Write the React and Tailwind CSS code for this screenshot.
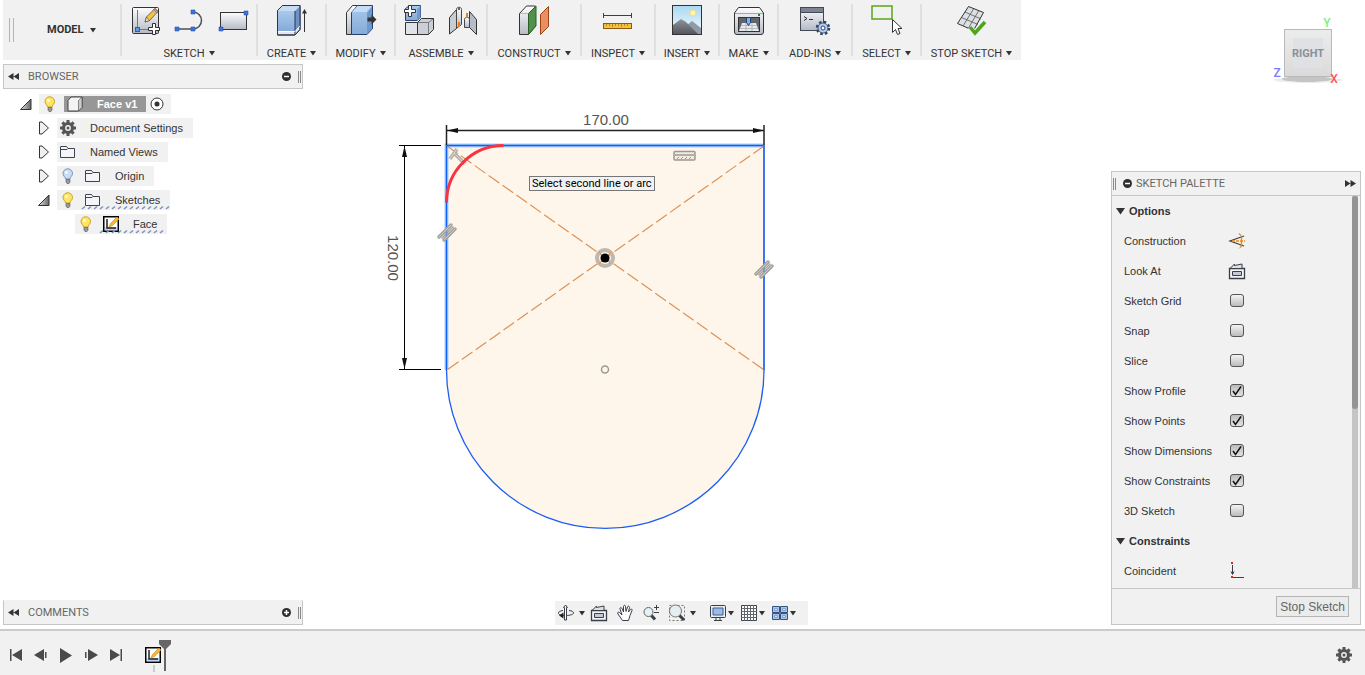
import React, { useState } from "react";

const Caret = () => (
  <svg width="6" height="5" viewBox="0 0 6 5" className="shrink-0" fill="#333">
    <path d="M0 0h6L3 4.5z" />
  </svg>
);

// Shared gradients for all the icons
const Defs = () => (
  <svg width="0" height="0" className="absolute">
    <defs>
      <linearGradient id="metal" x1="0" y1="0" x2="0" y2="1">
        <stop offset="0" stopColor="#fdfdfe" />
        <stop offset="1" stopColor="#b4bac5" />
      </linearGradient>
      <linearGradient id="blue" x1="0" y1="0" x2="0" y2="1">
        <stop offset="0" stopColor="#a9c8ec" />
        <stop offset="1" stopColor="#86abd8" />
      </linearGradient>
      <linearGradient id="sky" x1="0" y1="0" x2="0" y2="1">
        <stop offset="0" stopColor="#a9d8f2" />
        <stop offset="1" stopColor="#f4fbfe" />
      </linearGradient>
      <linearGradient id="dark" x1="0" y1="0" x2="0" y2="1">
        <stop offset="0" stopColor="#8f939a" />
        <stop offset="1" stopColor="#53565d" />
      </linearGradient>
      <linearGradient id="fold" x1="0" y1="0" x2="1" y2="0">
        <stop offset="0" stopColor="#e4e4e4" />
        <stop offset="1" stopColor="#666" />
      </linearGradient>
      <linearGradient id="cube" x1="0" y1="0" x2="0" y2="1">
        <stop offset="0" stopColor="#ececec" />
        <stop offset="1" stopColor="#dadada" />
      </linearGradient>
    </defs>
  </svg>
);

const ToolIcon = ({ children }) => (
  <svg width="32" height="32" viewBox="0 0 32 32" fill="none" className="shrink-0">
    {children}
  </svg>
);

const Plus = ({ x, y }) => (
  <path
    transform={`translate(${x} ${y})`}
    d="M4 0h3v4h4v3H7v4H4V7H0V4h4z"
    fill="#fff"
    stroke="#333"
  />
);

const Pencil = () => (
  <>
    <path d="M16 17l1.500-5L26 3.500l3 3L20.500 15.500z" fill="#f5c542" stroke="#5b4a21" strokeWidth=".8" />
    <path d="M16 17l1.500-5 3 3.500z" fill="#f0e0c4" stroke="#444" strokeWidth=".6" />
    <path d="M26 3.500l3 3L27.500 8l-3-3z" fill="#e59a8c" stroke="#333" strokeWidth=".6" />
    <path d="M24.500 5l3 3-1 1-3-3z" fill="#ddd" stroke="#666" strokeWidth=".4" />
  </>
);

const icons = {
  createSketch: (
    <ToolIcon>
      <rect x="3.500" y="2.500" width="26" height="26" rx="1" fill="url(#metal)" stroke="#333" />
      <path d="M8.500 5v18M8.500 24.500H27" stroke="#777" />
      <rect x="6.500" y="22.500" width="4" height="4" fill="#5b9bea" stroke="#2a5fb5" />
      <Pencil />
      <Plus x="19.500" y="18.500" />
    </ToolIcon>
  ),
  line: (
    <ToolIcon>
      <path d="M4 24h16a8.500 8.500 0 0 0 0-17" stroke="#4a4f58" strokeWidth="1.500" />
      <path d="M2 22h4v4H2zM18 22h4v4h-4zM18 5h4v4h-4z" fill="#3f73d8" stroke="#2655b0" strokeWidth=".6" />
    </ToolIcon>
  ),
  rectangle: (
    <ToolIcon>
      <rect x="3.500" y="7.500" width="26" height="17" fill="url(#metal)" stroke="#333" />
      <path d="M2 22h4v4H2zM27 6h4v4h-4z" fill="#3f73d8" stroke="#2655b0" strokeWidth=".6" />
    </ToolIcon>
  ),
  extrude: (
    <ToolIcon>
      <path d="M1.500 5.500l5-5H24v24l-5 5.500H1.500z" fill="#e3e6ea" stroke="#2a3550" />
      <path d="M2 6h17v20H2z" fill="url(#blue)" />
      <path d="M2 6l5-5h17l-5 5z" fill="#c6dcf4" />
      <path d="M19 6l5-5v20l-5 5z" fill="#6d93c6" />
      <path d="M1.500 5.500l5-5H24v24l-5 5.500H1.500zM19 6v23" stroke="#2a3550" />
      <path d="M2 26.500h17l5-5.500" stroke="#fff" strokeWidth=".8" />
      <path d="M28.500 27V5" stroke="#333" />
      <path d="M26 8.500l2.500-4.500L31 8.500z" fill="#333" />
    </ToolIcon>
  ),
  pressPull: (
    <ToolIcon>
      <path d="M1.500 7.500l6-7h6v29h-12z" fill="url(#metal)" stroke="#333" />
      <path d="M6.500 7.500l6-7h15v23l-5.500 6H6.500z" fill="url(#blue)" stroke="#24406e" />
      <path d="M7 7l5.500-6H27l-5.500 6z" fill="#c6dcf4" />
      <path d="M22 7.500l5-6v22l-5 5.500z" fill="#7099cc" />
      <path d="M22.500 12.500h4v-3l5 5-5 5v-3h-4z" fill="#333" />
    </ToolIcon>
  ),
  component: (
    <ToolIcon>
      <path d="M2.500 3.500l4-3h11v12l-3 3h-12z" fill="url(#blue)" stroke="#24406e" />
      <path d="M14 4.500l3.500-3.500v12l-3.500 3z" fill="#7099cc" />
      <path d="M2.500 17.500h12v12h-12z" fill="#dfe2e7" stroke="#333" />
      <path d="M14.500 17.500l4-4h12v11l-5 5h-11z" fill="#cbd0d7" stroke="#333" />
      <path d="M14.500 17.500h11l5-4M25.500 17.500v12" stroke="#555" strokeWidth=".7" />
      <Plus x="1.500" y=".500" />
    </ToolIcon>
  ),
  joint: (
    <ToolIcon>
      <path d="M2.500 12.500l7-8v19l-7 5.500z" fill="#c8cdd4" stroke="#333" />
      <path d="M9.500 4.500c0-3 5-3 5 0v15l-5 4z" fill="url(#metal)" stroke="#444" />
      <circle cx="12" cy="4" r="1" fill="#333" />
      <path d="M22.500 6.500l7 8v15l-7-7z" fill="#b7bdc6" stroke="#333" />
      <path d="M17.500 14.500c0-3 5-3 5 0v8h-5z" fill="url(#metal)" stroke="#444" />
      <path d="M12 17v5M20 8v5" stroke="#f07c1a" strokeWidth="2" />
    </ToolIcon>
  ),
  plane: (
    <ToolIcon>
      <path d="M1.500 8.500l7-7.500h9v20l-7 8.500h-9z" fill="url(#metal)" stroke="#333" />
      <path d="M10.500 8.500l7.500-7.500v20l-7.500 8.500z" fill="#4f9349" stroke="#2b5d2b" />
      <path d="M2 8.500h8.500" stroke="#999" strokeWidth=".6" />
      <path d="M22.500 9.500l8-8v20l-8 8z" fill="#e98f60" stroke="#9c4517" />
    </ToolIcon>
  ),
  measure: (
    <ToolIcon>
      <path d="M1.500 8v5M29.500 8v5M2 10.500h27" stroke="#3b3f45" />
      <rect x="1.500" y="18.500" width="28" height="5" fill="#f4c33a" stroke="#8c5a14" />
      <path d="M4.500 19v2M7.500 19v2M10.500 19v3M13.500 19v2M16.500 19v2M19.500 19v3M22.500 19v2M25.500 19v2" stroke="#b98628" />
    </ToolIcon>
  ),
  insert: (
    <ToolIcon>
      <rect x="1.500" y=".5" width="29" height="29" fill="url(#sky)" stroke="#333" />
      <circle cx="22" cy="8" r="3" fill="#fff4b0" stroke="#f2dc77" />
      <path d="M15 21l6-5 9 7v6H15z" fill="#8e9aa8" />
      <path d="M2 20l8-6 5 3 12 12H2z" fill="url(#dark)" />
    </ToolIcon>
  ),
  make: (
    <ToolIcon>
      <path d="M1.500 8l4-5.500h21l4 5.500v19q0 2.500-2.500 2.500H4q-2.500 0-2.500-2.500z" fill="url(#metal)" stroke="#333" />
      <path d="M2 8.500h28" stroke="#777" strokeWidth=".6" />
      <rect x="5.500" y="12.500" width="21" height="14" fill="#60646b" stroke="#333" />
      <path d="M9 18h14l3 8H6z" fill="#e6e8ec" />
      <path d="M8 20.500h16M7 23.500h18M13 18v8M19 18v8" stroke="#9aa0a8" strokeWidth=".6" />
      <path d="M13.500 12.500h4v5l-2 3-2-3z" fill="#7fb0ea" stroke="#24406e" />
      <path d="M25 9h2v2h-2z" fill="#188a18" />
    </ToolIcon>
  ),
  addIns: (
    <ToolIcon>
      <rect x="1.500" y="2.500" width="23" height="23" fill="url(#metal)" stroke="#444a55" />
      <path d="M2 3h22v4H2z" fill="#7d8491" />
      <path d="M1.500 7.500h23" stroke="#444a55" />
      <path d="M5 11.500l3 2-3 2M10 14.500h4" stroke="#333" />
      <circle cx="24" cy="23" r="5.500" stroke="#2d4468" strokeWidth="3.500" strokeDasharray="2.300 2.020" />
      <circle cx="24" cy="23" r="5" fill="#b5cdec" stroke="#2d4468" strokeWidth=".8" />
      <circle cx="24" cy="23" r="2" fill="#fff" stroke="#2d4468" />
    </ToolIcon>
  ),
  select: (
    <ToolIcon>
      <path d="M1 1h20v13H1z" stroke="#58a618" strokeWidth="1.500" />
      <path d="M21.500 14.500v13l3-3 2 5 2.500-1-2-5h4z" fill="#fff" stroke="#333" />
    </ToolIcon>
  ),
  stopSketch: (
    <ToolIcon>
      <path d="M1.500 18.500l11-17 15 6-10 18z" fill="#dcdfe4" stroke="#333" />
      <path d="M5.500 12.500l16.500 7M9 7l16 7M7 21l10.500-17M12.500 23l10-17" stroke="#555" strokeWidth=".8" />
      <path d="M14 22l5 6L29 17" stroke="#f1f1f1" strokeWidth="5" />
      <path d="M14 22l5 6L29 17" stroke="#4fa51a" strokeWidth="3.500" />
    </ToolIcon>
  ),
};

const toolGroups = [
  { label: "SKETCH", width: "w-[136px]", tools: ["createSketch", "line", "rectangle"] },
  { label: "CREATE", width: "w-[69px]", tools: ["extrude"] },
  { label: "MODIFY", width: "w-[69px]", tools: ["pressPull"] },
  { label: "ASSEMBLE", width: "w-[92px]", tools: ["component", "joint"] },
  { label: "CONSTRUCT", width: "w-[94px]", tools: ["plane"] },
  { label: "INSPECT", width: "w-[74px]", tools: ["measure"] },
  { label: "INSERT", width: "w-[64px]", tools: ["insert"] },
  { label: "MAKE", width: "w-[59px]", tools: ["make"] },
  { label: "ADD-INS", width: "w-[74px]", tools: ["addIns"] },
  { label: "SELECT", width: "w-[69px]", tools: ["select"] },
  { label: "STOP SKETCH", width: "w-[101px]", tools: ["stopSketch"] },
];

const Toolbar = () => (
  <header className="ml-[3px] flex h-[60px] w-fit shrink-0 bg-[#f1f1f1] font-[Roboto,sans-serif]">
    <div className="flex w-[117px] items-center">
      <div className="ml-1.5 h-6 w-[5px] border-x border-[#b5b5b5]" />
      <button className="ml-[33px] flex items-center gap-1.5 font-bold">
        MODEL <Caret />
      </button>
    </div>
    {toolGroups.map((group) => (
      <div key={group.label} className={`${group.width} flex`}>
        <div className="my-1 w-0.5 shrink-0 bg-[#dfdfdf]" />
        <div className="flex flex-1 flex-col items-center">
          <div className="flex h-[42px] items-center justify-center gap-3">
            {group.tools.map((tool) => (
              <button key={tool} aria-label={tool}>
                {icons[tool]}
              </button>
            ))}
          </div>
          <button className="mt-[5px] flex items-center gap-1 leading-[13px] whitespace-nowrap">
            {group.label} <Caret />
          </button>
        </div>
      </div>
    ))}
  </header>
);

const DoubleArrow = ({ right }) => (
  <svg width="11" height="7" viewBox="0 0 11 7" fill="#333" className={right ? "rotate-180" : ""}>
    <path d="M5.500 0v7L0 3.500zM11 0v7L5.500 3.500z" />
  </svg>
);

const RoundSign = ({ plus }) => (
  <svg width="9" height="9" viewBox="0 0 9 9">
    <circle cx="4.500" cy="4.500" r="4.500" fill="#2e2e2e" />
    <path d={plus ? "M2 4.500h5M4.500 2v5" : "M2 4.500h5"} stroke="#fff" strokeWidth="1.500" />
  </svg>
);

const SidePanelBar = ({ title, plus }) => (
  <div
    className={`ml-[3px] flex h-[25px] w-[300px] items-center border border-[#c6c6c6] bg-[#f1f1f1] pl-1 font-[Roboto,sans-serif] ${
      plus ? "border-t-[#f1f1f1]" : ""
    }`}
  >
    <button aria-label="Collapse">
      <DoubleArrow />
    </button>
    <span className="ml-[9px] flex-1 text-[#666]">{title}</span>
    <button aria-label={plus ? "Add" : "Minimize"}>
      <RoundSign plus={plus} />
    </button>
    <div className="mr-px ml-[7px] h-3 w-[3px] border-x border-[#888]" />
  </div>
);

const Toggle = ({ open }) => (
  <svg width="16" height="16" viewBox="0 0 16 16">
    {open ? (
      <path d="M2.500 13.500h10.500V3z" fill="url(#fold)" stroke="#333" />
    ) : (
      <path d="M3.500 2h2.500l6.500 6-6.500 6H3.500z" fill="#eee" stroke="#333" />
    )}
  </svg>
);

const Bulb = ({ off }) => (
  <svg width="16" height="16" viewBox="0 0 16 16">
    <path
      d="M5.500 11C5.500 9 3 8 3 5.500a4.500 4.500 0 0 1 9.500 0C12.500 8 10 9 10 11z"
      fill={off ? "#c9dcf5" : "#ffe566"}
      stroke={off ? "#7b93b8" : "#c9a227"}
    />
    <circle cx="6.500" cy="4.500" r="1.500" fill="#fff" opacity=".8" />
    <path d="M6 11.500h4V14l-1 1.500H7L6 14z" fill="#999" stroke="#555" strokeWidth=".6" />
  </svg>
);

const Folder = () => (
  <svg width="16" height="16" viewBox="0 0 16 16" fill="#f3f5f9" stroke="#3d4350">
    <path d="M.5 13.500V3q0-.5.500-.5h5.500l1.500 2h6.500v9z" />
    <path d="M.5 5.500h6.500l1-1" fill="none" />
  </svg>
);

const Gear = () => (
  <svg width="16" height="16" viewBox="0 0 16 16" fill="none" stroke="#555">
    <circle cx="8" cy="8" r="4.500" strokeWidth="3.200" />
    <path d="M8 0v3M8 13v3M0 8h3M13 8h3M2.350 2.350l2 2M11.650 11.650l2 2M2.350 13.650l2-2M11.650 4.350l2-2" strokeWidth="3" />
    <circle cx="8" cy="8" r="1.500" fill="#555" stroke="none" />
  </svg>
);

const SketchThumb = () => (
  <svg width="16" height="16" viewBox="0 0 16 16">
    <rect x=".75" y=".75" width="14.500" height="14.500" fill="#fff" stroke="#000" strokeWidth="1.500" />
    <path d="M2 11h12v3H2z" fill="#b9d3f5" />
    <path d="M4 3v9h9" fill="none" stroke="#222" strokeWidth="1.500" />
    <path d="M6 11l1.500-3.500L14 1l2 2-6.500 6.500z" fill="#f5b82e" stroke="#c98a1c" strokeWidth=".6" />
  </svg>
);

const BodyCube = () => (
  <svg width="16" height="16" viewBox="0 0 16 16" fill="#f4f4f4" stroke="#444">
    <path d="M1 4.500l3-3.500h11v10.500l-3.500 3.500H1z" />
    <path d="M11.500 4.500L15 1v10.500l-3.500 3.500z" fill="#ccc" strokeWidth=".6" />
  </svg>
);

// Diagonal dashes drawn under items that are being edited
const Hatch = ({ count }) => (
  <svg width={count * 6} height="5" viewBox={`0 0 ${count * 6} 5`} className="absolute bottom-0 left-6">
    {Array.from({ length: count }, (_, i) => (
      <path key={i} d={`M${i * 6 + 1} 4l3-2.500`} stroke="#8093b5" strokeWidth="1.600" />
    ))}
  </svg>
);

const treeItems = [
  { label: "Document Settings", indent: "pl-9", icon: <Gear /> },
  { label: "Named Views", indent: "pl-9", icon: <Folder /> },
  { label: "Origin", indent: "pl-9", bulb: true, off: true, icon: <Folder /> },
  { label: "Sketches", indent: "pl-9", bulb: true, open: true, hatch: 15, icon: <Folder /> },
  { label: "Face", indent: "pl-[54px]", bulb: true, leaf: true, hatch: 11, icon: <SketchThumb /> },
];

const BrowserTree = () => (
  <ul className="mt-[5px] flex flex-col gap-1">
    <li className="flex h-5 items-center gap-[5px] pl-[18px]">
      <button aria-label="Collapse Face v1">
        <Toggle open />
      </button>
      <div className="relative flex h-5 items-center bg-[#f1f1f1] pr-[7px] pl-[3px]">
        <Bulb />
        <div className="ml-1.5 flex h-4 items-center bg-[#979797] pr-[9px] pl-[3px] font-bold text-white">
          <BodyCube />
          <span className="ml-3.5">Face v1</span>
        </div>
        <input type="radio" defaultChecked aria-label="Activate Face v1" className="peer sr-only" />
        <svg width="14" height="14" viewBox="0 0 14 14" className="ml-1">
          <circle cx="7" cy="7" r="6" fill="#fff" stroke="#333" />
          <circle cx="7" cy="7" r="2.500" fill="#333" />
        </svg>
      </div>
    </li>
    {treeItems.map((item) => (
      <li key={item.label} className={`${item.indent} flex h-5 items-center gap-[5px]`}>
        {item.leaf ? (
          <span className="w-4" />
        ) : (
          <button aria-label={`Toggle ${item.label}`}>
            <Toggle open={item.open} />
          </button>
        )}
        <div className="relative flex h-5 items-center bg-[#f1f1f1] pr-2.5 pl-[3px]">
          {item.bulb && (
            <span className="mr-[9px]">
              <Bulb off={item.off} />
            </span>
          )}
          {item.icon}
          <span className="ml-3.5">{item.label}</span>
          {item.hatch && <Hatch count={item.hatch} />}
        </div>
      </li>
    ))}
  </ul>
);

const Parallel = ({ x, y }) => (
  <g transform={`translate(${x} ${y})`} strokeLinecap="round">
    <path d="M-8 4L4-8M-3 7L8-4" stroke="#a5a29d" strokeWidth="3.500" />
    <path d="M-8 4L4-8M-3 7L8-4" stroke="#cfcbc5" strokeWidth="1" />
    <path d="M-5 5L6-6" stroke="#a5a29d" strokeWidth="1.500" />
  </g>
);

const SketchCanvas = () => (
  <div className="relative mt-[45px] ml-[77px] w-fit">
    <svg width="400" height="430" viewBox="380 105 400 430" fill="none">
      <path d="M446.500 145.500H764V370A158.750 158.500 0 0 1 446.500 370z" fill="#fff6eb" />
      <path d="M446.500 370V145.500H764" stroke="#a9cdfa" strokeWidth="4" />
      <path d="M447 146L764 370M764 146L447 370" stroke="#dd9155" strokeDasharray="13 4" strokeWidth="1.200" />
      <path d="M764 370A158.750 158.500 0 0 1 446.500 370" stroke="#1a5cf5" strokeWidth="1.300" />
      <path d="M446.500 370V145.500H764" stroke="#0f5ff5" strokeWidth="1.400" />
      <path d="M764 145V370" stroke="#3b76f7" strokeWidth="2" />

      {/* constraint glyphs */}
      <path d="M450 159l7-10M454 153l11 11" stroke="#b3aea7" strokeWidth="3.500" />
      <path d="M450 159l7-10M454 153l11 11" stroke="#ddd6cc" strokeWidth="1" />
      <Parallel x={447} y={233} />
      <Parallel x={764} y={270} />
      <rect x="674" y="151.500" width="21" height="8.500" rx="1" fill="#f3ebe1" stroke="#9d9892" strokeWidth="1.500" />
      <path d="M675 155h19" stroke="#9d9892" strokeWidth="1.500" />
      <path d="M677 159l2-2M681 159l2-2M685 159l2-2M689 159l2-2" stroke="#9d9892" />

      <path d="M446.500 202.500A57 57 0 0 1 503.500 145.500" stroke="#fa3340" strokeWidth="3" />

      {/* dimensions */}
      <g stroke="#222">
        <path d="M446.500 125v20M764 125v20M447 130.500h317" strokeWidth="1.500" />
        <path d="M399 145.500h42M399 369.500h42M404.500 146v223" stroke="#000" />
      </g>
      <path d="M447 130.500l11-2.500v5zM764 130.500l-11-2.500v5zM404.500 146l-2.500 11h5zM404.500 369l-2.500-11h5z" fill="#111" />
      <g fill="#555" fontSize="15" textAnchor="middle">
        <text x="606" y="125">170.00</text>
        <text transform="translate(388 258) rotate(90)">120.00</text>
      </g>

      <circle cx="605" cy="258" r="8" stroke="#bfb8ae" strokeWidth="4" />
      <path d="M599 252l12 12M611 252l-12 12" stroke="#dd9155" />
      <circle cx="605" cy="258" r="4.500" fill="#000" />
      <circle cx="605" cy="369.500" r="3.500" fill="#fff6eb" stroke="#999" strokeWidth="1.500" />
    </svg>
    <div className="absolute top-[71px] left-[149px] border border-[#767676] bg-[#f2f2f2] px-0.5 font-[Roboto,sans-serif] text-[11px] leading-[13px] whitespace-nowrap text-black">
      Select second line or arc
    </div>
  </div>
);

const NavSvg = ({ children }) => (
  <svg width="18" height="18" viewBox="0 0 18 18" fill="none" stroke="#3b3f47" className="shrink-0">
    {children}
  </svg>
);

const LookAt = () => (
  <NavSvg>
    <path d="M1.500 6.500h15v10h-15z" fill="#f5f6f8" strokeWidth="1.300" />
    <path d="M4.500 9.500h9v4h-9z" fill="#c3c9d6" />
    <path d="M2.500 6l4-4v1.500l7.500-1.500V6" fill="#dde0e6" />
  </NavSvg>
);

const Orbit = () => (
  <NavSvg>
    <path d="M12 6.500c3 .3 4.500 1.200 4.500 2.500s-3 2.500-8 2.500-7-1-7-2.500 1.500-2 4.500-2.500" />
    <path d="M8.500 1l2 2.500h-1V16h-2V3.500h-1z" fill="#fff" />
    <path d="M2 11.500l4.500-3v6z" fill="#222" stroke="none" />
  </NavSvg>
);

const Hand = () => (
  <NavSvg>
    <path
      d="M6.500 16.500L2 10c-1-1.500.5-2.500 1.500-1.500L6 11 4 5c-.5-1.500 1.500-2 2-.5L7.500 8 7.500 2.500c0-1.500 2-1.500 2 0l.5 5 1.500-4.500c.5-1.500 2-1 2 .5L12.500 8l2-2.500c1-1 2 0 1.500 1L14 11.500l-1.500 5z"
      fill="#fff"
    />
  </NavSvg>
);

const Zoom = () => (
  <NavSvg>
    <path d="M9 11l4 4.500" strokeWidth="3" />
    <circle cx="6.500" cy="8" r="4.500" fill="#e6f1f5" stroke="#666" />
    <path d="M14.500 1v5M12 3.500h5M12 8.500h5" />
  </NavSvg>
);

const ZoomWindow = () => (
  <NavSvg>
    <path d="M1.500 1.500h15v15h-15z" strokeDasharray="2 2" stroke="#777" />
    <path d="M11 11l5 5" strokeWidth="3" />
    <circle cx="7.500" cy="7" r="6" fill="#e3eff0" stroke="#777" />
  </NavSvg>
);

const Monitor = () => (
  <NavSvg>
    <rect x="1.500" y="1.500" width="15" height="12" rx="1" fill="#e8ebf0" />
    <path d="M4 4h10v7H4z" fill="#9cbce6" stroke="#3f5f95" />
    <path d="M7 14v2.500h4V14M5 16.500h8" />
  </NavSvg>
);

const Grid = () => (
  <NavSvg>
    <path d="M1.500 1.500h15v15h-15z" fill="#fff" />
    <path d="M4.500 1v16M7.500 1v16M10.500 1v16M13.500 1v16M1 4.500h16M1 7.500h16M1 10.500h16M1 13.500h16" stroke="#63676f" />
  </NavSvg>
);

const Viewports = () => (
  <NavSvg>
    <path d="M1.500 2.500h7v6h-7zM9.500 2.500h7v6h-7zM1.500 9.500h7v6h-7zM9.500 9.500h7v6h-7z" fill="#a9c5ec" stroke="#34517f" />
    <path d="M3.500 4.500h3v2h-3zM11.500 4.500h3v2h-3zM3.500 11.500h3v2h-3zM11.500 11.500h3v2h-3z" fill="#d8e6f8" stroke="#7f9fcc" />
  </NavSvg>
);

const NavBar = () => (
  <nav className="mb-1 ml-[252px] flex h-6 w-[253px] items-center gap-2 bg-[#f1f1f1] pl-0.5">
    <button aria-label="Orbit" className="flex items-center gap-1">
      <Orbit />
      <Caret />
    </button>
    <button aria-label="Look At" className="-ml-[3px]">
      <LookAt />
    </button>
    <button aria-label="Pan">
      <Hand />
    </button>
    <button aria-label="Zoom">
      <Zoom />
    </button>
    <button aria-label="Zoom Window" className="flex items-center gap-1">
      <ZoomWindow />
      <Caret />
    </button>
    <div className="ml-[5px] flex gap-1.5">
      <button aria-label="Display Settings" className="flex items-center gap-px">
        <Monitor />
        <Caret />
      </button>
      <button aria-label="Grid and Snaps" className="flex items-center gap-px">
        <Grid />
        <Caret />
      </button>
      <button aria-label="Viewports" className="flex items-center gap-px">
        <Viewports />
        <Caret />
      </button>
    </div>
  </nav>
);

const ViewCube = () => (
  <svg width="80" height="80" viewBox="1265 10 80 80" className="mt-2.5 ml-[154px] shrink-0 font-[Roboto,sans-serif]">
    <ellipse cx="1308" cy="80" rx="34" ry="3" fill="#ececec" />
    <ellipse cx="1307" cy="79" rx="25" ry="3" fill="#c4c4c4" />
    <rect x="1284.500" y="29.500" width="47" height="47" fill="url(#cube)" stroke="#b9b9b9" />
    <rect x="1293" y="38" width="30" height="30" fill="#dfe1e4" />
    <text x="1308" y="57" fontSize="11" fontWeight="700" fill="#8b9097" textAnchor="middle">
      RIGHT
    </text>
    <g fontSize="12" fontWeight="500" textAnchor="middle">
      <text x="1327" y="27" fill="#7cf07c">Y</text>
      <text x="1277" y="77" fill="#7c7cf5">Z</text>
      <text x="1334" y="83" fill="#f55">X</text>
    </g>
  </svg>
);

const Construction = () => (
  <NavSvg>
    <path d="M16 4L2 9l14 5" strokeWidth="1.200" />
    <path d="M4 9h13M11 1.500l3 3M13.500 5.500v7M14 13.500l-3 3" stroke="#ef8a12" strokeDasharray="3 1" strokeWidth="1.400" />
  </NavSvg>
);

const Coincident = () => (
  <NavSvg>
    <path d="M4.500 3v9M3 9.500l1.500 3 1.500-3M4 15.500h12" />
    <path d="M3 0h2v2H3zM3 14h2v2H3z" fill="#e02a10" stroke="none" />
  </NavSvg>
);

const options = [
  { label: "Sketch Grid", checked: false },
  { label: "Snap", checked: false },
  { label: "Slice", checked: false },
  { label: "Show Profile", checked: true },
  { label: "Show Points", checked: true },
  { label: "Show Dimensions", checked: true },
  { label: "Show Constraints", checked: true },
  { label: "3D Sketch", checked: false },
];

const SectionTitle = ({ children }) => (
  <button className="flex h-[30px] items-center gap-1 pl-1 font-bold">
    <svg width="9" height="7" viewBox="0 0 9 7" fill="#333">
      <path d="M0 0h9L4.500 6.500z" />
    </svg>
    {children}
  </button>
);

const PaletteTool = ({ label, children }) => (
  <div className="flex h-[30px] items-center pl-3">
    <span className="w-[104px]">{label}</span>
    <button aria-label={label}>{children}</button>
  </div>
);

const SketchPalette = () => {
  const [values, setValues] = useState(options.map((o) => o.checked));

  const toggle = (index) => {
    setValues(values.map((v, i) => (i === index ? !v : v)));
  };

  return (
    <section className="mt-auto mb-1 border border-[#c6c6c6] bg-[#f1f1f1]">
      <div className="flex h-6 items-center border-b border-[#c6c6c6] pr-1 font-[Roboto,sans-serif]">
        <div className="ml-px h-3 w-[3px] border-x border-[#888]" />
        <button aria-label="Minimize" className="ml-[7px]">
          <RoundSign />
        </button>
        <span className="ml-1 flex-1 text-[#666]">SKETCH PALETTE</span>
        <button aria-label="Expand">
          <DoubleArrow right />
        </button>
      </div>
      <div className="flex">
        <div className="flex-1 pb-0.5">
          <SectionTitle>Options</SectionTitle>
          <PaletteTool label="Construction">
            <Construction />
          </PaletteTool>
          <PaletteTool label="Look At">
            <LookAt />
          </PaletteTool>
          {options.map((option, i) => (
            <label key={option.label} className="flex h-[30px] items-center pl-3">
              <span className="w-[106px]">{option.label}</span>
              <span className="relative h-3.5 w-3.5">
                <input
                  type="checkbox"
                  checked={values[i]}
                  onChange={() => toggle(i)}
                  className="block h-[13px] w-3.5 appearance-none rounded-[3px] border border-[#555] bg-linear-to-b from-[#f4f4f4] to-[#bcbcbc] checked:from-[#bcbcbc] checked:to-[#e2e2e2]"
                />
                {values[i] && (
                  <svg width="14" height="13" viewBox="0 0 14 13" fill="none" className="pointer-events-none absolute inset-0">
                    <path d="M3 7l2.500 3.500L11 2.500" stroke="#111" strokeWidth="1.500" />
                  </svg>
                )}
              </span>
            </label>
          ))}
          <SectionTitle>Constraints</SectionTitle>
          <PaletteTool label="Coincident">
            <Coincident />
          </PaletteTool>
        </div>
        <div className="mr-0.5 w-1.5 bg-[#c4c4c6]">
          <div className="h-[213px] rounded-full bg-[#949494]" />
        </div>
      </div>
      <div className="flex h-9 items-center justify-end border-t border-[#c6c6c6] pr-[11px]">
        <button className="h-[21px] border border-[#b5b5b5] bg-[#ebebeb] px-[3px] text-[12px] text-[#666]">Stop Sketch</button>
      </div>
    </section>
  );
};

const playback = [
  { label: "Go to start", d: "M2 2h1.500v12H2zM14 2v12L4 8z" },
  { label: "Step back", d: "M11 2v12L1 8zM12 5h1.500v6H12z" },
  { label: "Play", d: "M2 1v15l12-7.500z" },
  { label: "Step forward", d: "M2 5h1.500v6H2zM5 2v12l10-6z" },
  { label: "Go to end", d: "M2 2v12l10-6zM12.500 2H14v12h-1.500z" },
];

const Timeline = () => (
  <footer className="flex h-[46px] shrink-0 items-center border-t-2 border-[#cbcbcb] bg-[#f1f1f1] pt-1 pr-[13px] pl-2">
    <div className="flex gap-[9px]">
      {playback.map((item) => (
        <button key={item.label} aria-label={item.label}>
          <svg width="16" height="16" viewBox="0 0 16 16" fill="#4a4a4a">
            <path d={item.d} />
          </svg>
        </button>
      ))}
    </div>
    <div className="relative ml-[21px] flex h-10 items-center">
      <button aria-label="Sketch feature">
        <SketchThumb />
      </button>
      <svg width="28" height="34" viewBox="0 0 28 34" className="absolute top-1 left-0">
        <path d="M9 26v7" stroke="#ccc" strokeWidth="2" />
        <path d="M14 1h12v4l-5 5v22h-2V10l-5-5z" fill="#666" />
      </svg>
    </div>
    <button aria-label="Preferences" className="ml-auto">
      <Gear />
    </button>
  </footer>
);

const App = () => {
  return (
    <div className="flex min-h-screen flex-col bg-white font-['Liberation_Sans',Arial,sans-serif] text-[11px] leading-4 text-[#333]">
      <Defs />
      <div className="flex flex-1">
        <div className="flex flex-1 flex-col">
          <Toolbar />
          <main className="flex flex-1">
            <aside className="flex w-[303px] shrink-0 flex-col pt-1">
              <SidePanelBar title="BROWSER" />
              <BrowserTree />
              <div className="mt-auto mb-1">
                <SidePanelBar title="COMMENTS" plus />
              </div>
            </aside>
            <div className="flex flex-1 flex-col justify-between">
              <SketchCanvas />
              <NavBar />
            </div>
          </main>
        </div>
        <aside className="mr-1 flex w-[250px] shrink-0 flex-col">
          <ViewCube />
          <SketchPalette />
        </aside>
      </div>
      <Timeline />
    </div>
  );
};

export default App;
